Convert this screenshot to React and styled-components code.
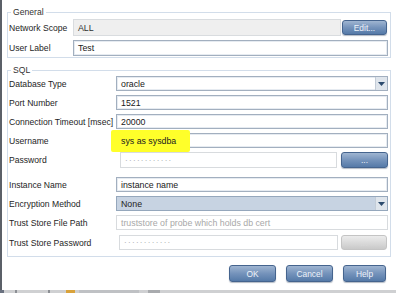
import React from 'react'
import styled, { createGlobalStyle } from 'styled-components'

const GlobalStyle = createGlobalStyle`
  html, body { margin: 0; padding: 0; background: #fff; }
  body { font-family: "Liberation Sans", Arial, sans-serif; }
`

const Screen = styled.div`
  width: 396px;
  height: 293px;
  overflow: hidden;
  display: flex;
  flex-direction: column;
  background: #fff;
`

const Dialog = styled.div`
  flex: 1;
  display: flex;
  flex-direction: column;
  border-left: 2px solid #5b6068;
  padding: 0 5px 0 5px;
`

const Group = styled.fieldset`
  margin: ${p => p.$top}px 0 0;
  padding: 0 2px 1px 1px;
  border: 1px solid #d2ddea;
  min-width: 0;
`

const Legend = styled.legend`
  margin-left: 2px;
  padding: 0 2px;
  font-size: 8.6px;
  line-height: 10px;
  color: #333;
`

const Row = styled.div`
  display: grid;
  grid-template-columns: ${p => p.$label}px 1fr auto;
  align-items: center;
  column-gap: ${p => p.$gap || 0}px;
  height: ${p => p.$h || 15}px;
  margin-top: ${p => p.$mt || 4}px;
`

const Label = styled.span`
  font-size: 8.6px;
  color: #1e1e1e;
  white-space: nowrap;
`

const fieldLook = {
  normal: 'background: #fff; border-color: #a2afbf; box-shadow: inset 0 0 0 1px #e6ebf1; color: #202020;',
  readonly: 'background: #efefef; border-color: #d9dcdf; color: #303030;',
  disabled: 'background: #fff; border-color: #d8dbde; color: #a8a8a8;',
  selected: 'background: #c7d3e2; border-color: #95a7bc; color: #1e1e1e;',
}

const Field = styled.div`
  position: relative;
  height: ${p => p.$h || 15}px;
  box-sizing: border-box;
  border: 1px solid;
  ${p => fieldLook[p.$look || 'normal']}
  display: flex;
  align-items: center;
  padding-left: 4px;
  font-size: 8.8px;
  white-space: nowrap;
  overflow: visible;
`

const Value = styled.span`
  position: relative;
  z-index: 1;
  flex: 1;
`

const Dots = styled.span`
  font-size: 8px;
  letter-spacing: 1.3px;
  color: #9a9a9a;
`

const Arrow = styled.span`
  width: 11px;
  align-self: stretch;
  background: #dfe5ec;
  border-left: 1px solid #c3ccd7;
  display: flex;
  align-items: center;
  justify-content: center;
`

const Highlight = styled.span`
  position: absolute;
  left: -6px;
  top: -4px;
  width: 79px;
  height: 22px;
  background: #ffff2a;
  border-radius: 2px;
`

const Button = styled.button`
  width: ${p => p.$w}px;
  height: ${p => p.$h || 15}px;
  margin: 0 ${p => p.$mr || 0}px 0 0;
  padding: 0;
  box-sizing: border-box;
  border-radius: 3px;
  font-family: "Liberation Sans", Arial, sans-serif;
  font-size: 8.4px;
  ${p => p.disabled
    ? 'border: 1px solid #c4c4c4; background: linear-gradient(#ececec, #d9d9d9 55%, #c9c9c9); color: #d8d8d8;'
    : 'border: 1px solid #45648e; background: linear-gradient(#9fb5d1, #7593bb 50%, #557aa8); color: #eef3fa; box-shadow: 0 1px 1px rgba(40,60,90,0.35);'}
`

const Footer = styled.div`
  display: flex;
  justify-content: flex-end;
  gap: 10px;
  margin-top: 8px;
  padding-right: 5px;
`

const Taskbar = styled.div`
  height: 3px;
  display: flex;
  gap: 1px;
  background: #cfd0d2;
`

const TaskItem = styled.span`
  width: ${p => p.$w}px;
  margin-left: ${p => p.$ml || 0}px;
  background: ${p => p.$c};
`

function ArrowDown() {
  return (
    <svg width="7" height="4" viewBox="0 0 7 4">
      <path d="M0 0h7L3.5 4z" fill="#2b4a6d" />
    </svg>
  )
}

function Select({ value, look }) {
  return (
    <Field $look={look} style={{ paddingRight: 0 }}>
      <Value>{value}</Value>
      <Arrow><ArrowDown /></Arrow>
    </Field>
  )
}

export default function App() {
  return (
    <Screen>
      <GlobalStyle />
      <Dialog>
        <Group $top={7}>
          <Legend>General</Legend>
          <Row $label={64} $h={17} $mt={2}>
            <Label>Network Scope</Label>
            <Field $look="readonly" $h={17}><Value>ALL</Value></Field>
            <Button $w={45} $mr={1} style={{ marginLeft: 1 }}>Edit...</Button>
          </Row>
          <Row $label={64} $h={16} $mt={4}>
            <Label>User Label</Label>
            <Field $h={16}><Value>Test</Value></Field>
          </Row>
        </Group>

        <Group $top={7}>
          <Legend>SQL</Legend>
          <Row $label={107} $mt={1}>
            <Label>Database Type</Label>
            <Select value="oracle" />
          </Row>
          <Row $label={107}>
            <Label>Port Number</Label>
            <Field><Value>1521</Value></Field>
          </Row>
          <Row $label={107}>
            <Label>Connection Timeout [msec]</Label>
            <Field><Value>20000</Value></Field>
          </Row>
          <Row $label={107}>
            <Label>Username</Label>
            <Field>
              <Highlight />
              <Value>sys as sysdba</Value>
            </Field>
          </Row>
          <Row $label={107} $h={16} $gap={4}>
            <Label>Password</Label>
            <Field $look="disabled" $h={16}><Dots>············</Dots></Field>
            <Button $w={47} $h={16}>...</Button>
          </Row>
          <Row $label={107} $mt={9}>
            <Label>Instance Name</Label>
            <Field><Value>instance name</Value></Field>
          </Row>
          <Row $label={107}>
            <Label>Encryption Method</Label>
            <Select value="None" look="selected" />
          </Row>
          <Row $label={107}>
            <Label>Trust Store File Path</Label>
            <Field $look="disabled"><Value>truststore of probe which holds db cert</Value></Field>
          </Row>
          <Row $label={107} $mt={5} $gap={3}>
            <Label>Trust Store Password</Label>
            <Field $look="disabled"><Dots>············</Dots></Field>
            <Button $w={46} $mr={1} disabled>...</Button>
          </Row>
          <div style={{ height: 5 }} />
        </Group>

        <Footer>
          <Button $w={47} $h={17}>OK</Button>
          <Button $w={47} $h={17}>Cancel</Button>
          <Button $w={43} $h={17}>Help</Button>
        </Footer>
      </Dialog>
      <Taskbar>
        <TaskItem $w={4} $c="#6a7280" />
        <TaskItem $w={2} $ml={10} $c="#8c8f94" />
        <TaskItem $w={2} $ml={30} $c="#8c8f94" />
        <TaskItem $w={9} $ml={15} $c="#d9a23a" />
        <TaskItem $w={60} $ml={3} $c="#bfc1c4" />
        <TaskItem $w={12} $ml={8} $c="#a9abae" />
      </Taskbar>
    </Screen>
  )
}
